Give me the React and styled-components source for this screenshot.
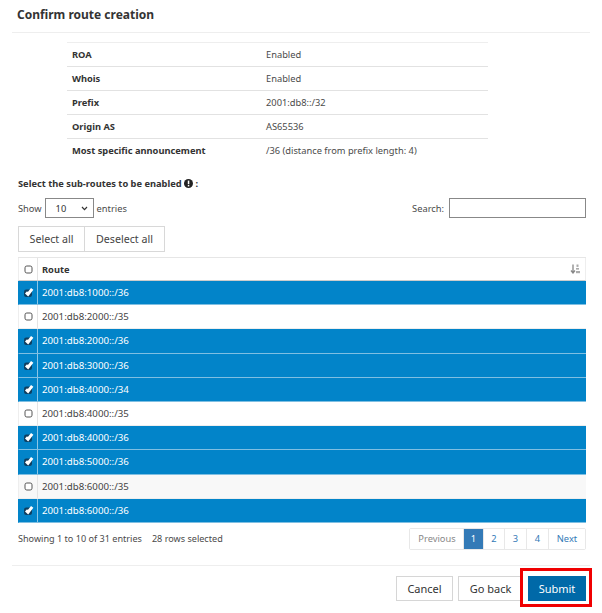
import React from 'react';
import styled, { createGlobalStyle } from 'styled-components';

const GlobalStyle = createGlobalStyle`
    html, body {
        margin: 0;
        background: #fff;
    }
    body {
        font-family: "Noto Sans", "Open Sans", sans-serif;
        font-size: 9.3px;
        color: #4a4a4a;
    }
`

const Page = styled.div`
    width: 602px;
    height: 613px;
    overflow: hidden;
    position: relative;
`

const Header = styled.div`
    margin: 0 12px;
    height: 33px;
    padding: 7px 5px 0;
    box-sizing: border-box;
    border-bottom: 1px solid #eee;
`

const Title = styled.h1`
    margin: 0;
    font-size: 12px;
    line-height: 16px;
    font-weight: 700;
    color: #333;
`

const InfoTable = styled.div`
    width: 421px;
    margin: 9px 0 0 67px;
    border-top: 1px solid #eee;
`

const InfoRow = styled.div`
    display: flex;
    height: 24px;
    box-sizing: border-box;
    align-items: center;
    padding-left: 5px;
    border-bottom: 1px solid ${props => props.$last ? 'transparent' : '#e2e2e2'};
`

const InfoLabel = styled.div`
    width: 194px;
    flex: none;
    font-weight: 700;
    color: #333;
`

const Section = styled.div`
    padding: 0 16px 0 18px;
`

const SelectLabel = styled.div`
    margin-top: 14px;
    line-height: 14px;
    font-weight: 700;
    color: #333;
`

const Controls = styled.div`
    display: flex;
    justify-content: space-between;
    align-items: center;
    margin-top: 7px;
    height: 20px;
`

const ControlGroup = styled.label`
    display: flex;
    align-items: center;
    gap: 3px;
`

const FakeSelect = styled.div`
    width: 49px;
    height: 20px;
    box-sizing: border-box;
    border: 1px solid #888;
    display: flex;
    align-items: center;
    justify-content: space-between;
    padding: 1px 5px 0 10px;
    color: #333;
`

const SearchBox = styled.input`
    width: 137px;
    height: 20px;
    box-sizing: border-box;
    border: 1px solid #888;
    margin-left: 2px;
    padding: 0;
    background: #fff;
`

const ButtonGroup = styled.div`
    display: flex;
    margin-top: 8px;
`

const GroupButton = styled.div`
    width: ${props => props.$width}px;
    height: 26px;
    box-sizing: border-box;
    display: flex;
    align-items: center;
    justify-content: center;
    font-size: 10.7px;
    color: #444;
    border: 1px solid #d8d8d8;
    border-left-width: ${props => props.$first ? '1px' : '0'};
`

const Table = styled.div`
    margin-top: 5px;
    border-top: 1px solid #e6e6e6;
`

const HeadRow = styled.div`
    display: flex;
    height: 23px;
    box-sizing: border-box;
    align-items: center;
    border-bottom: 1px solid #ccc;
    border-left: 1px solid #eee;
    border-right: 1px solid #eee;
    font-weight: 700;
    color: #333;
`

const Row = styled.div`
    display: flex;
    height: 24.2px;
    box-sizing: border-box;
    align-items: center;
    background: ${props => props.$selected ? '#0284c9' : props.$odd ? '#f8f8f8' : '#fff'};
    color: ${props => props.$selected ? '#fff' : '#444'};
    border-bottom: 1px solid ${props => props.$selected ? '#7fbfe2' : '#eee'};
    border-left: 1px solid ${props => props.$selected ? '#0284c9' : '#eee'};
`

const CheckCell = styled.div`
    width: 18px;
    height: 100%;
    flex: none;
    display: flex;
    align-items: center;
    justify-content: center;
    border-right: 1px solid ${props => props.$selected ? '#8cc6e6' : '#e4e4e4'};
`

const RouteCell = styled.div`
    flex: 1;
    padding-left: 4px;
    display: flex;
    align-items: center;
    justify-content: space-between;
    padding-right: 4px;
    font-size: ${props => props.$plain ? '9.7px' : 'inherit'};
`

const Footer = styled.div`
    display: flex;
    justify-content: space-between;
    align-items: center;
    margin-top: 5px;
    height: 22px;
`

const FooterInfo = styled.div`
    display: flex;
    gap: 10px;
    font-size: 9.1px;
`

const Pager = styled.div`
    display: flex;
    height: 22px;
    box-sizing: border-box;
    border: 1px solid #e8e8e8;
    border-radius: 2px;
`

const PageLink = styled.div`
    display: flex;
    align-items: center;
    justify-content: center;
    box-sizing: border-box;
    width: ${props => props.$width}px;
    background: ${props => props.$active ? '#337ab7' : '#fff'};
    color: ${props => props.$active ? '#fff' : props.$muted ? '#888' : '#337ab7'};
    border-left: 1px solid ${props => props.$first ? 'transparent' : '#e8e8e8'};
`

const Actions = styled.div`
    margin: 15px 12px 0;
    padding: 10px 4px 0 0;
    border-top: 1px solid #eee;
    display: flex;
    justify-content: flex-end;
    gap: 5px;
`

const ActionButton = styled.div`
    position: relative;
    height: 25px;
    width: ${props => props.$width}px;
    box-sizing: border-box;
    display: flex;
    align-items: center;
    justify-content: center;
    font-size: 11px;
    color: ${props => props.$primary ? '#fff' : '#333'};
    background: ${props => props.$primary ? '#0069a8' : '#fff'};
    border: 1px solid ${props => props.$primary ? '#0069a8' : '#d6d6d6'};
`

const Highlight = styled.div`
    position: absolute;
    left: -9px;
    top: -9px;
    right: -7px;
    bottom: -7px;
    border: 3px solid #f00001;
`

const CheckIcon = ({ checked }) => (
    <svg width="11" height="11" viewBox="0 0 11 11">
        {checked ? (
            <>
                <rect x="1" y="2.5" width="8" height="7.5" rx="2.2" fill="#0f3f60" />
                <path d="M3 5.4 L5 7.2 L9.2 1.8" fill="none" stroke="#fff" strokeWidth="3" />
            </>
        ) : (
            <rect x="2" y="2" width="7" height="7" rx="1.8" fill="#fff" stroke="#555" strokeWidth="1" />
        )}
    </svg>
)

const InfoIcon = () => (
    <svg width="9" height="9" viewBox="0 0 9 9" style={{ verticalAlign: '-1px' }}>
        <circle cx="4.5" cy="4.5" r="4.5" fill="#222" />
        <rect x="3.8" y="1.6" width="1.5" height="3.6" fill="#fff" />
        <rect x="3.8" y="6" width="1.5" height="1.4" fill="#fff" />
    </svg>
)

const SortIcon = () => (
    <svg width="11" height="10" viewBox="0 0 11 10">
        <path d="M3 0.5 V8 M1 6.5 L3 9 L5 6.5" fill="none" stroke="#888" strokeWidth="1.3" />
        <rect x="6.5" y="0.5" width="2" height="2.4" fill="#aaa" />
        <rect x="6" y="4" width="3" height="1.6" fill="#aaa" />
        <rect x="6" y="7" width="4" height="2.2" fill="#aaa" />
    </svg>
)

const Chevron = () => (
    <svg width="7" height="5" viewBox="0 0 7 5">
        <path d="M1 1 L3.5 3.6 L6 1" fill="none" stroke="#333" strokeWidth="1.2" />
    </svg>
)

const info = [
    ['ROA', 'Enabled'],
    ['Whois', 'Enabled'],
    ['Prefix', '2001:db8::/32'],
    ['Origin AS', 'AS65536'],
    ['Most specific announcement', '/36 (distance from prefix length: 4)'],
]

const routes = [
    ['2001:db8:1000::/36', true],
    ['2001:db8:2000::/35', false],
    ['2001:db8:2000::/36', true],
    ['2001:db8:3000::/36', true],
    ['2001:db8:4000::/34', true],
    ['2001:db8:4000::/35', false],
    ['2001:db8:4000::/36', true],
    ['2001:db8:5000::/36', true],
    ['2001:db8:6000::/35', false],
    ['2001:db8:6000::/36', true],
]

const pages = [
    { label: 'Previous', width: 53, muted: true },
    { label: '1', width: 20, active: true },
    { label: '2', width: 21 },
    { label: '3', width: 22 },
    { label: '4', width: 22 },
    { label: 'Next', width: 37 },
]

const App = () => {
    return (
        <Page>
            <GlobalStyle />
            <Header>
                <Title>Confirm route creation</Title>
            </Header>
            <InfoTable>
                {info.map(([label, value], i) => (
                    <InfoRow key={label} $last={i === info.length - 1}>
                        <InfoLabel>{label}</InfoLabel>
                        <div>{value}</div>
                    </InfoRow>
                ))}
            </InfoTable>
            <Section>
                <SelectLabel>Select the sub-routes to be enabled <InfoIcon /> :</SelectLabel>
                <Controls>
                    <ControlGroup>
                        Show
                        <FakeSelect>10 <Chevron /></FakeSelect>
                        entries
                    </ControlGroup>
                    <ControlGroup>
                        Search:
                        <SearchBox type="text" />
                    </ControlGroup>
                </Controls>
                <ButtonGroup>
                    <GroupButton $first $width={67}>Select all</GroupButton>
                    <GroupButton $width={80}>Deselect all</GroupButton>
                </ButtonGroup>
                <Table>
                    <HeadRow>
                        <CheckCell><CheckIcon /></CheckCell>
                        <RouteCell>Route <SortIcon /></RouteCell>
                    </HeadRow>
                    {routes.map(([route, selected], i) => (
                        <Row key={i} $selected={selected} $odd={i % 2 === 0}>
                            <CheckCell $selected={selected}><CheckIcon checked={selected} /></CheckCell>
                            <RouteCell $plain>{route}</RouteCell>
                        </Row>
                    ))}
                </Table>
                <Footer>
                    <FooterInfo>
                        <span>Showing 1 to 10 of 31 entries</span>
                        <span>28 rows selected</span>
                    </FooterInfo>
                    <Pager>
                        {pages.map((p, i) => (
                            <PageLink key={p.label} $width={p.width} $active={p.active} $muted={p.muted} $first={i === 0}>
                                {p.label}
                            </PageLink>
                        ))}
                    </Pager>
                </Footer>
            </Section>
            <Actions>
                <ActionButton $width={57}>Cancel</ActionButton>
                <ActionButton $width={65}>Go back</ActionButton>
                <ActionButton $width={58} $primary>
                    Submit
                    <Highlight />
                </ActionButton>
            </Actions>
        </Page>
    )
}

export default App;
